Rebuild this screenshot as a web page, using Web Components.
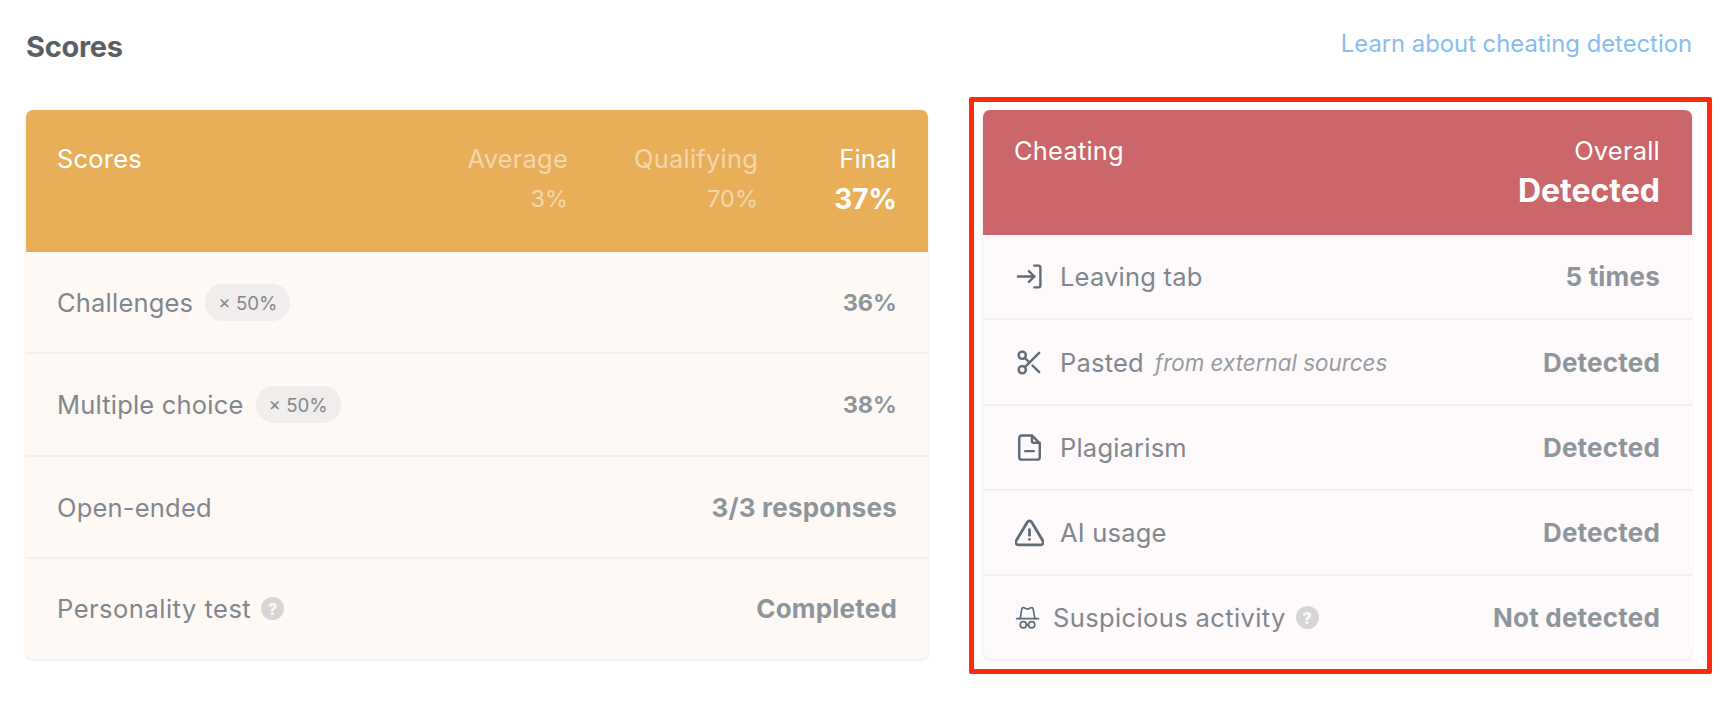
<!DOCTYPE html>
<html>
<head>
<meta charset="utf-8">
<style>
    html, body { margin: 0; background: #fff; }
    body { font-family: "Inter", "Liberation Sans", sans-serif; }
</style>
</head>
<body>
<result-page>
    <section-head slot="head" link="Learn about cheating detection">Scores</section-head>

    <result-card slot="left" tone="score" style="width: 902px">
        <card-header slot="header" tall>
            <span slot="title">Scores</span>
            <header-stat label="Average" value="3%" muted></header-stat>
            <header-stat label="Qualifying" value="70%" muted style="width: 190px"></header-stat>
            <header-stat label="Final" value="37%" strong style="width: 139px"></header-stat>
        </card-header>
        <card-row h="102" value="36%" num>Challenges<mult-pill>× 50%</mult-pill></card-row>
        <card-row h="103" value="38%" num>Multiple choice<mult-pill>× 50%</mult-pill></card-row>
        <card-row h="102" value="3/3 responses">Open-ended</card-row>
        <card-row h="99" value="Completed" last wide>Personality test<help-dot></help-dot></card-row>
    </result-card>

    <result-card slot="right" tone="cheat" style="width: 709px" marked>
        <card-header slot="header">
            <span slot="title">Cheating</span>
            <header-stat label="Overall" value="Detected" strong big></header-stat>
        </card-header>
        <card-row h="85" value="5 times" tight>
            <row-icon name="enter"></row-icon>Leaving tab
        </card-row>
        <card-row h="86" value="Detected" tight>
            <row-icon name="cut"></row-icon>Pasted<em slot="note">from external sources</em>
        </card-row>
        <card-row h="85" value="Detected" tight>
            <row-icon name="file"></row-icon>Plagiarism
        </card-row>
        <card-row h="85" value="Detected" tight>
            <row-icon name="alert"></row-icon>AI usage
        </card-row>
        <card-row h="83" value="Not detected" tight last wide>
            <row-icon name="spy" narrow></row-icon>Suspicious activity<help-dot></help-dot>
        </card-row>
    </result-card>
</result-page>

<script>
class ResultPage extends HTMLElement {
    constructor() {
        super();
        this.attachShadow({ mode: 'open' });
        this.shadowRoot.innerHTML = `
            <style>
                :host { display: block; width: 1720px; height: 712px; box-sizing: border-box; padding: 0 28px 0 26px; overflow: hidden; }
                .cards { display: flex; justify-content: space-between; align-items: stretch; height: 549px; }
            </style>
            <slot name="head"></slot>
            <div class="cards">
                <slot name="left"></slot>
                <slot name="right"></slot>
            </div>
        `;
    }
}

class SectionHead extends HTMLElement {
    constructor() {
        super();
        this.attachShadow({ mode: 'open' });
        this.shadowRoot.innerHTML = `
            <style>
                :host { display: flex; justify-content: space-between; height: 110px; }
                h2 { margin: 31px 0 0; font-size: 29px; line-height: 32px; font-weight: 700; color: #5b5f64; letter-spacing: -0.3px; }
                a { margin-top: 29px; font-size: 23.8px; line-height: 30px; color: #87bdf0; text-decoration: none; }
            </style>
            <h2><slot></slot></h2>
            <a></a>
        `;
    }
    connectedCallback() {
        this.shadowRoot.querySelector('a').textContent = this.getAttribute('link');
    }
}

class ResultCard extends HTMLElement {
    constructor() {
        super();
        this.attachShadow({ mode: 'open' });
        this.shadowRoot.innerHTML = `
            <style>
                :host { display: flex; flex-direction: column; position: relative; border-radius: 7px; box-shadow: 0 1px 3px rgba(60, 60, 60, 0.14); }
                :host([tone=score]) { background: #fef9f5; --head: #e8af58; --line: #f4efeb; }
                :host([tone=cheat]) { background: #fefafb; --head: #cb676a; --line: #f2eff0; }
                .mark { display: none; position: absolute; inset: -13px -20px -15px -14px; border: 5px solid #ff2a0c; border-radius: 2px; pointer-events: none; }
                :host([marked]) .mark { display: block; }
            </style>
            <slot name="header"></slot>
            <slot></slot>
            <div class="mark"></div>
        `;
    }
}

class CardHeader extends HTMLElement {
    constructor() {
        super();
        this.attachShadow({ mode: 'open' });
        this.shadowRoot.innerHTML = `
            <style>
                :host { display: flex; box-sizing: border-box; height: 125px; padding: 26px 32px 0 31px; background: var(--head); color: #fff; border-radius: 7px 7px 0 0; font-size: 25.5px; line-height: 30px; letter-spacing: 0.2px; }
                :host([tall]) { height: 142px; padding: 34px 31px 0; }
                .title { flex: 1; }
                .stats { display: flex; }
            </style>
            <div class="title"><slot name="title"></slot></div>
            <div class="stats"><slot></slot></div>
        `;
    }
}

class HeaderStat extends HTMLElement {
    constructor() {
        super();
        this.attachShadow({ mode: 'open' });
        this.shadowRoot.innerHTML = `
            <style>
                :host { display: block; text-align: right; }
                :host([muted]) { color: rgba(255, 255, 255, 0.5); }
                .value { margin-top: 10px; font-size: 23.5px; letter-spacing: 0; }
                :host([strong]) .value { font-weight: 700; font-size: 28px; }
                :host([big]) .value { font-size: 32px; }
            </style>
            <div class="label"></div>
            <div class="value"></div>
        `;
    }
    connectedCallback() {
        this.shadowRoot.querySelector('.label').textContent = this.getAttribute('label');
        this.shadowRoot.querySelector('.value').textContent = this.getAttribute('value');
    }
}

class CardRow extends HTMLElement {
    constructor() {
        super();
        this.attachShadow({ mode: 'open' });
        this.shadowRoot.innerHTML = `
            <style>
                :host { display: flex; align-items: center; justify-content: space-between; box-sizing: border-box; padding: 0 31px; border-bottom: 2px solid var(--line); color: #80878e; font-size: 25.5px; letter-spacing: 0.2px; }
                :host([tight]) { padding: 0 32px; }
                :host([last]) { border-bottom: none; }
                :host([wide]) .name { letter-spacing: 0.5px; }
                :host([wide][tight]) .name { letter-spacing: 0.38px; }
                .name { display: flex; align-items: center; }
                .value { font-weight: 700; font-size: 26px; color: #8f969b; }
                :host([num]) .value { font-size: 23.5px; letter-spacing: 0; }
                ::slotted(em) { margin-left: 11px; font-size: 22.4px; color: #979ca1; letter-spacing: 0; }
            </style>
            <div class="name"><slot></slot><slot name="note"></slot></div>
            <div class="value"></div>
        `;
    }
    connectedCallback() {
        this.style.height = this.getAttribute('h') + 'px';
        this.shadowRoot.querySelector('.value').textContent = this.getAttribute('value');
    }
}

class MultPill extends HTMLElement {
    constructor() {
        super();
        this.attachShadow({ mode: 'open' });
        this.shadowRoot.innerHTML = `
            <style>
                :host { display: inline-block; margin-left: 12px; padding: 3px 13px 0; height: 34px; border-radius: 18px; background: #f1eded; color: #80878e; font-size: 18.7px; line-height: 34px; letter-spacing: 0; }
            </style>
            <slot></slot>
        `;
    }
}

class HelpDot extends HTMLElement {
    constructor() {
        super();
        this.attachShadow({ mode: 'open' });
        this.shadowRoot.innerHTML = `
            <style>
                :host { display: inline-flex; align-items: center; justify-content: center; width: 23px; height: 23px; margin-left: 10px; border-radius: 50%; background: #d6d6d8; color: #fdf9f8; font-size: 16px; font-weight: 800; letter-spacing: 0; }
            </style>
            ?
        `;
    }
}

const ICONS = {
    enter: '<path d="M16 3h3.500a1.500 1.500 0 0 1 1.500 1.500v15a1.500 1.500 0 0 1-1.500 1.500h-3.500"/><path d="M2.500 12h13.500"/><path d="M11.500 7.500l4.500 4.500-4.500 4.500"/>',
    cut: '<circle cx="6" cy="6" r="3"/><circle cx="6" cy="18" r="3"/><path d="M20 4L8.120 15.880"/><path d="M14.470 14.480L20 20"/><path d="M8.120 8.120L12 12"/>',
    file: '<path d="M14 2.500v4.500a1 1 0 0 0 1 1h5.500"/><path d="M18.500 22H5.500a2 2 0 0 1-2-2V4a2 2 0 0 1 2-2h8.500l6.500 6.500v11.500a2 2 0 0 1-2 2z"/><path d="M8.500 15h7"/>',
    alert: '<path d="M12 9v4"/><path d="M10.363 3.591l-8.106 13.534a1.914 1.914 0 0 0 1.636 2.871h16.214a1.914 1.914 0 0 0 1.636-2.870l-8.106-13.536a1.914 1.914 0 0 0-3.274 0"/><path d="M12 16h.01"/>',
    spy: '<path d="M1.500 13h21"/><path d="M5 13l1.500-9q.4-2 2.200-1.400L12 4l3.300-1.400q1.800-.6 2.200 1.400L19 13"/><circle cx="8" cy="19" r="3"/><circle cx="16" cy="19" r="3"/><path d="M11 19h2"/>'
};

const VIEWS = { alert: '1.500 .5 21 21' };

class RowIcon extends HTMLElement {
    constructor() {
        super();
        this.attachShadow({ mode: 'open' });
        this.shadowRoot.innerHTML = `
            <style>
                :host { display: inline-flex; width: 29px; height: 29px; margin-right: 16px; color: #5f6c76; }
                :host([narrow]) { width: 25px; height: 25px; margin-right: 13px; }
                :host([narrow]) svg { stroke-width: 1.6; }
                svg { width: 100%; height: 100%; fill: none; stroke: currentColor; stroke-width: 2; stroke-linecap: round; stroke-linejoin: round; }
            </style>
            <svg viewBox="0 0 24 24"></svg>
        `;
    }
    connectedCallback() {
        const name = this.getAttribute('name');
        const svg = this.shadowRoot.querySelector('svg');
        svg.innerHTML = ICONS[name];
        if (VIEWS[name]) svg.setAttribute('viewBox', VIEWS[name]);
    }
}

customElements.define('result-page', ResultPage);
customElements.define('section-head', SectionHead);
customElements.define('result-card', ResultCard);
customElements.define('card-header', CardHeader);
customElements.define('header-stat', HeaderStat);
customElements.define('card-row', CardRow);
customElements.define('mult-pill', MultPill);
customElements.define('help-dot', HelpDot);
customElements.define('row-icon', RowIcon);
</script>
</body>
</html>
